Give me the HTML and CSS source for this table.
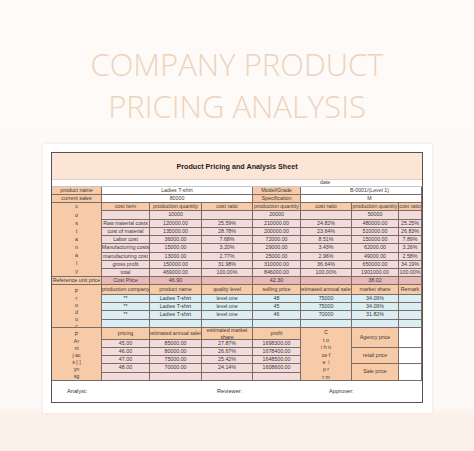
FILE: index.html
```html
<!DOCTYPE html>
<html>
<head>
<meta charset="utf-8">
<link rel="stylesheet" href="styles.css">
</head>
<body>
<div class="hero">
  <h1 class="hero-title">COMPANY PRODUCT<br>PRICING ANALYSIS</h1>
</div>
<div class="card">
  <div class="sheet">
    <div class="c title s8">Product Pricing and Analysis Sheet</div>
    <div class="c date s8">date</div>

    <div class="c o">product name</div>
    <div class="c w s3">Ladies T-shirt</div>
    <div class="c o">Model/Grade</div>
    <div class="c w s3 off">B-0001/(Level 1)</div>

    <div class="c o">current sales</div>
    <div class="c w s3">80000</div>
    <div class="c o">Specification</div>
    <div class="c w s3 off">M</div>

    <div class="c o r9 letters"><span>c</span><span>o</span><span>s</span><span>t</span><span>a</span><span>n</span><span>a</span><span>l</span><span>y</span></div>
    <div class="c o">cost item</div>
    <div class="c o">production quantity</div>
    <div class="c o">cost ratio</div>
    <div class="c o">production quantity</div>
    <div class="c o">cost ratio</div>
    <div class="c o">production quantity</div>
    <div class="c o">cost ratio</div>

    <div class="c p"></div><div class="c p">10000</div><div class="c p"></div><div class="c p">20000</div><div class="c p"></div><div class="c p">50000</div><div class="c p"></div>
    <div class="c p">Raw material costs</div><div class="c p">120000.00</div><div class="c p">25.59%</div><div class="c p">210000.00</div><div class="c p">24.82%</div><div class="c p">480000.00</div><div class="c p">25.25%</div>
    <div class="c p">cost of material</div><div class="c p">135000.00</div><div class="c p">28.78%</div><div class="c p">200000.00</div><div class="c p">23.64%</div><div class="c p">510000.00</div><div class="c p">26.83%</div>
    <div class="c p">Labor cost</div><div class="c p">36000.00</div><div class="c p">7.68%</div><div class="c p">72000.00</div><div class="c p">8.51%</div><div class="c p">150000.00</div><div class="c p">7.89%</div>
    <div class="c p">Manufacturing costs</div><div class="c p">15000.00</div><div class="c p">3.20%</div><div class="c p">29000.00</div><div class="c p">3.43%</div><div class="c p">62000.00</div><div class="c p">3.26%</div>
    <div class="c p">manufacturing cost</div><div class="c p">13000.00</div><div class="c p">2.77%</div><div class="c p">25000.00</div><div class="c p">2.96%</div><div class="c p">49000.00</div><div class="c p">2.58%</div>
    <div class="c p">gross profit</div><div class="c p">150000.00</div><div class="c p">31.98%</div><div class="c p">310000.00</div><div class="c p">36.64%</div><div class="c p">650000.00</div><div class="c p">34.19%</div>
    <div class="c p">total</div><div class="c p">469000.00</div><div class="c p">100.00%</div><div class="c p">846000.00</div><div class="c p">100.00%</div><div class="c p">1901000.00</div><div class="c p">100.00%</div>

    <div class="c o">Reference unit price</div>
    <div class="c d">Cost Price</div><div class="c d">46.90</div><div class="c d"></div><div class="c d">42.30</div><div class="c d"></div><div class="c d">38.02</div><div class="c d"></div>

    <div class="c o r5 lines prod">P<br>r<br>o<br>d<br>u<br>c<br>t</div>
    <div class="c o">production company</div>
    <div class="c o">product name</div>
    <div class="c o">quality level</div>
    <div class="c o">selling price</div>
    <div class="c o">estimated annual sales</div>
    <div class="c o">market share</div>
    <div class="c o">Remark</div>

    <div class="c b">**</div><div class="c b">Ladies T-shirt</div><div class="c b">level one</div><div class="c b">48</div><div class="c b">75000</div><div class="c b">34.09%</div><div class="c b"></div>
    <div class="c b">**</div><div class="c b">Ladies T-shirt</div><div class="c b">level one</div><div class="c b">45</div><div class="c b">75000</div><div class="c b">34.09%</div><div class="c b"></div>
    <div class="c b">**</div><div class="c b">Ladies T-shirt</div><div class="c b">level one</div><div class="c b">46</div><div class="c b">70000</div><div class="c b">31.82%</div><div class="c b"></div>
    <div class="c b"></div><div class="c b"></div><div class="c b"></div><div class="c b"></div><div class="c b"></div><div class="c b"></div><div class="c b"></div>

    <div class="c o r6 lines pa">P<br>Ar<br>ni<br>j ac<br>s [ ]<br>yn<br>sg</div>
    <div class="c o">pricing</div>
    <div class="c o">estimated annual sales</div>
    <div class="c o wrap">estimated market share</div>
    <div class="c o">profit</div>
    <div class="c o r6 lines cf">C<br>t o<br>i h n<br>ce f<br>e &nbsp;i<br>p r<br>r m</div>
    <div class="c o r2">Agency price</div>
    <div class="c w r2"></div>

    <div class="c p">45.00</div><div class="c p">85000.00</div><div class="c p">27.87%</div><div class="c p">1698300.00</div>
    <div class="c p">46.00</div><div class="c p">80000.00</div><div class="c p">26.67%</div><div class="c p">1678400.00</div>
    <div class="c o r2">retail price</div>
    <div class="c w r2"></div>
    <div class="c p">47.00</div><div class="c p">75000.00</div><div class="c p">25.42%</div><div class="c p">1648500.00</div>
    <div class="c p">48.00</div><div class="c p">70000.00</div><div class="c p">24.14%</div><div class="c p">1608600.00</div>
    <div class="c o r2">Sale price</div>
    <div class="c w r2"></div>
    <div class="c p"></div><div class="c p"></div><div class="c p"></div><div class="c p"></div>

    <div class="c foot s8">
      <span class="f1">Analyst:</span>
      <span class="f2">Reviewer:</span>
      <span class="f3">Approver:</span>
    </div>
  </div>
</div>
</body>
</html>
```

FILE: styles.css
```css
html, body {
  margin: 0;
  padding: 0;
}
body {
  width: 474px;
  height: 451px;
  overflow: hidden;
  background: linear-gradient(to bottom, #fdfaf8 0, #fdf9f7 405px, #fcf0ea 416px, #fcf0ea 100%);
  font-family: "Liberation Sans", Arial, sans-serif;
}
.hero {
  padding-top: 43px;
  height: 144px;
  box-sizing: border-box;
}
.hero-title {
  margin: 0;
  text-align: center;
  font-family: "Open Sans", "Noto Sans", sans-serif;
  font-weight: 300;
  font-size: 31px;
  line-height: 42px;
  color: #eed3bc;
  letter-spacing: 0;
}
.card {
  margin-left: 43px;
  width: 389px;
  box-sizing: border-box;
  padding: 8px 9px 10px 8px;
  background: #ffffff;
  box-shadow: 0 0 3px rgba(210, 180, 160, 0.35);
}
.sheet {
  display: grid;
  grid-template-columns: 50px 48px 52px 51px 48px 51px 47px 23px;
  grid-template-rows: 27px 7px 8px 8px 8px 9px 8px 8px 8px 9px 8px 8px 8px 8px 10px 8px 8px 9px 8px 12px 8px 8px 8px 9px 8px 21px;
  border: 1px solid #5a5250;
  width: 370px;
  font-size: 5.3px;
  color: #3a3a3a;
}
.c {
  box-sizing: border-box;
  border-right: 1px solid #7d6c64;
  border-bottom: 1px solid #7d6c64;
  display: flex;
  align-items: center;
  justify-content: center;
  white-space: nowrap;
  overflow: hidden;
  line-height: 1;
}
.s3 { grid-column: span 3; }
.s8 { grid-column: span 8; }
.r2 { grid-row: span 2; }
.r5 { grid-row: span 5; }
.r6 { grid-row: span 6; }
.r9 { grid-row: span 9; }

.title {
  background: #fce5d5;
  border-right: none;
  border-bottom: 1px solid #d9d2ce;
  font-weight: bold;
  font-size: 7.2px;
  color: #1e1e1e;
  padding-top: 1px;
}
.date {
  background: #ffffff;
  border-right: none;
  border-bottom: 1px solid #c9c4c2;
  justify-content: flex-start;
  padding-left: 268px;
}
.o { background: #f8cba8; }
.w { background: #ffffff; }
.p { background: #f2dcdb; }
.d { background: #e6b8b7; }
.b { background: #daeef3; }
.off { padding-left: 17px; }

.letters {
  flex-direction: column;
  justify-content: space-around;
}
.letters span { display: block; }

.lines {
  display: block;
  text-align: center;
  white-space: normal;
  line-height: 7px;
}
.prod { padding-top: 2.5px; }
.pa { padding-top: 2.5px; }
.cf { padding-top: 1.3px; line-height: 7.4px; }

.wrap {
  white-space: normal;
  text-align: center;
  line-height: 6.5px;
}

.foot {
  background: #ffffff;
  border-right: none;
  border-bottom: none;
  justify-content: flex-start;
  padding-left: 15px;
  font-size: 5.7px;
  color: #333;
}
.f1 { width: 150px; }
.f2 { width: 112px; }
.f3 { width: 60px; }
```
